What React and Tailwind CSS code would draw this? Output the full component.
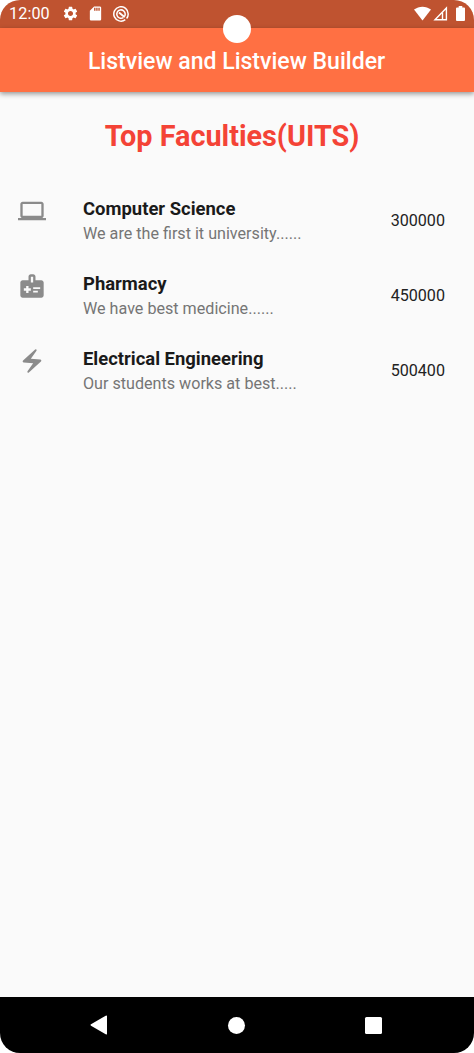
import React from 'react';
import { MdElectricBolt, MdLaptop, MdMedicalInformation, MdSdCard, MdSettings } from 'react-icons/md';

const faculties = [
  { icon: MdLaptop, name: 'Computer Science', note: 'We are the first it university......', total: '300000' },
  { icon: MdMedicalInformation, name: 'Pharmacy', note: 'We have best medicine......', total: '450000' },
  { icon: MdElectricBolt, name: 'Electrical Engineering', note: 'Our students works at best.....', total: '500400' },
];

function StatusBar() {
  return (
    <div className="flex h-7 shrink-0 items-center justify-between bg-[#bf5330] pl-[9px] pr-[9px] text-white">
      <div className="flex items-center">
        <span className="w-[53px] pt-px text-[16.2px] leading-none tracking-[0.1px]">12:00</span>
        <MdSettings className="h-[17px] w-[17px]" />
        <MdSdCard className="ml-[8px] h-[17px] w-[17px]" />
        <svg className="ml-[9px] h-4 w-4" viewBox="0 0 16 16" fill="none" stroke="currentColor">
          <path d="M12.300 13.700A7.200 7.200 0 1 1 15.200 8q0 2.700-1.600 4.500" strokeWidth="1.5" />
          <path d="M10.300 11.600A4.200 4.200 0 1 1 12.200 8q0 1.300-.6 2.200" strokeWidth="1.5" />
          <path d="M6 6.500l5.700 4.800" strokeWidth="1.800" />
        </svg>
      </div>
      <div className="flex items-center pb-px">
        <svg className="h-[15px] w-[17px]" viewBox="0 0 17 15" fill="currentColor">
          <path d="M8.500 14.500L0 3.600C5-.3 12-.3 17 3.600z" />
        </svg>
        <svg className="ml-[2px] h-[15px] w-[15px]" viewBox="0 0 15 15" fill="none" stroke="currentColor">
          <path d="M2 13.700L13.400 2v11.700z" strokeWidth="1.400" />
          <path d="M9.500 6.500v7" strokeWidth="1.400" />
        </svg>
        <svg className="ml-[8px] h-[15px] w-[9px]" viewBox="0 0 9 15" fill="currentColor">
          <path d="M2.700 0h3.600v1.600H8a1 1 0 0 1 1 1V14a1 1 0 0 1-1 1H1a1 1 0 0 1-1-1V2.600a1 1 0 0 1 1-1h1.700z" />
        </svg>
      </div>
    </div>
  );
}

function FacultyTile({ icon: Icon, name, note, total }) {
  return (
    <li className="flex h-[74.8px] pl-[18px] pr-[29px]">
      <Icon className="mt-[10px] h-7 w-7 shrink-0 text-[#8b8b8b]" />
      <div className="ml-[37px] flex-1 pt-[9px]">
        <h2 className="text-[18.45px] font-bold leading-[26px] text-[#1a1a1a]">{name}</h2>
        <p className="text-[16.14px] leading-[23px] text-[#757575]">{note}</p>
      </div>
      <span className="pt-[22px] text-[16.14px] leading-[24px] text-[#222]">{total}</span>
    </li>
  );
}

function NavigationBar() {
  return (
    <nav className="flex h-14 shrink-0 items-center justify-between bg-black pl-[90px] pr-[92px] text-white">
      <svg className="h-5 w-[17px]" viewBox="0 0 17 20" fill="currentColor">
        <path d="M15.700.7Q17 0 17 1.200v17.600q0 1.200-1.300.4L1 10.700Q0 10 1 9.300z" />
      </svg>
      <div className="h-[17px] w-[17px] rounded-full bg-white" />
      <div className="h-[17px] w-[17px] rounded-[1.5px] bg-white" />
    </nav>
  );
}

export default function App() {
  return (
    <div className="h-[1053px] w-[474px] bg-white font-[Roboto,sans-serif]">
      <div className="relative flex h-full flex-col overflow-hidden rounded-[20px] bg-[#fafafa]">
        <StatusBar />
        <header className="flex h-16 shrink-0 items-center justify-center bg-[#ff7043] pt-[3px] shadow-[0_2px_5px_rgba(0,0,0,0.4)]">
          <h1 className="pr-px text-[23.06px] font-medium leading-none text-white">Listview and Listview Builder</h1>
        </header>
        <div className="absolute left-[223px] top-[15px] h-7 w-7 rounded-full bg-white" />

        <main className="flex-1">
          <p className="mt-[26px] pr-[10px] text-center text-[28.8px] font-bold leading-9 text-[#f44336]">Top Faculties(UITS)</p>
          <ul className="mt-[33px]">
            {faculties.map((faculty) => (
              <FacultyTile key={faculty.name} {...faculty} />
            ))}
          </ul>
        </main>

        <NavigationBar />
      </div>
    </div>
  );
}
